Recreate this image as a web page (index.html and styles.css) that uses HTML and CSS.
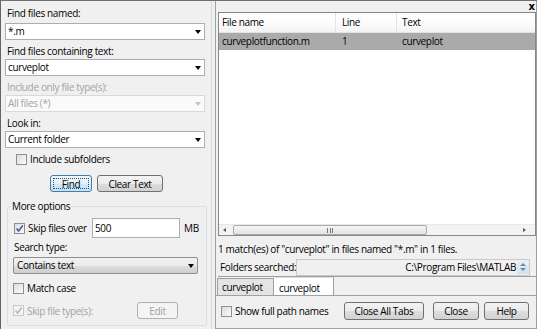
FILE: index.html
```html
<!DOCTYPE html>
<html>
<head>
<meta charset="utf-8">
<link rel="stylesheet" href="styles.css">
</head>
<body>
<div class="app">
  <div class="left">
    <div class="lbl first">Find files named:</div>
    <div class="combo"><span class="val">*.m</span><i class="arr"></i></div>
    <div class="lbl">Find files containing text:</div>
    <div class="combo"><span class="val">curveplot</span><i class="arr"></i></div>
    <div class="lbl dis">Include only file type(s):</div>
    <div class="combo disabled"><span class="val">All files (*)</span><i class="arr"></i></div>
    <div class="lbl">Look in:</div>
    <div class="combo"><span class="val">Current folder</span><i class="arr"></i></div>
    <div class="chkrow sub"><i class="box"></i><span>Include subfolders</span></div>
    <div class="btnrow">
      <div class="btn find"><span class="focus">Find</span></div>
      <div class="btn clear">Clear Text</div>
    </div>
    <fieldset class="group">
      <legend>More options</legend>
      <div class="skiprow">
        <i class="box checked"><svg width="9" height="9" viewBox="0 0 9 9"><path d="M1.5 4.5 L3.6 7 L7.8 1.5" fill="none" stroke="#3d57a0" stroke-width="1.5"/></svg></i>
        <span class="skiptxt">Skip files over</span>
        <div class="input">500</div>
        <span class="mb">MB</span>
      </div>
      <div class="lbl glbl">Search type:</div>
      <div class="combo sel"><span class="val">Contains text</span><i class="arr"></i></div>
      <div class="chkrow match"><i class="box"></i><span>Match case</span></div>
      <div class="chkrow skipft">
        <i class="box checked dbox"><svg width="9" height="9" viewBox="0 0 9 9"><path d="M1.5 4.5 L3.6 7 L7.8 1.5" fill="none" stroke="#b5b5b5" stroke-width="1.5"/></svg></i>
        <span class="dis skipft-txt">Skip file type(s):</span>
        <div class="btn edit">Edit</div>
      </div>
    </fieldset>
  </div>
  <div class="right">
    <div class="topbar"><span class="close">x</span></div>
    <div class="results">
      <div class="table">
        <div class="thead">
          <div class="c c1">File name</div>
          <div class="c c2">Line</div>
          <div class="c c3">Text</div>
        </div>
        <div class="trow sel">
          <div class="c c1">curveplotfunction.m</div>
          <div class="c c2">1</div>
          <div class="c c3">curveplot</div>
        </div>
        <div class="tspace"></div>
        <div class="hscroll">
          <span class="sarr l"></span>
          <div class="thumb"><span class="grip"></span></div>
          <span class="sarr r"></span>
        </div>
      </div>
      <div class="status">1 match(es) of "curveplot" in files named "*.m" in 1 files.</div>
      <div class="folders">
        <span class="flbl">Folders searched:</span>
        <div class="ffield"><span class="fval">C:\Program Files\MATLAB</span>
          <span class="spin"><i class="up"></i><i class="dn"></i></span>
        </div>
      </div>
    </div>
    <div class="tabs">
      <div class="tab t1">curveplot</div>
      <div class="tab t2">curveplot</div>
    </div>
    <div class="bottom">
      <div class="chkrow full"><i class="box"></i><span>Show full path names</span></div>
      <div class="btn cat">Close All Tabs</div>
      <div class="btn cls">Close</div>
      <div class="btn hlp">Help</div>
    </div>
  </div>
</div>
</body>
</html>
```

FILE: styles.css
```css
* { box-sizing: border-box; margin: 0; padding: 0; }
html, body { width: 537px; height: 329px; overflow: hidden; }
body {
  background: #f0f0f0;
  font-family: "Open Sans", "Noto Sans", sans-serif;
  font-size: 10px;
  letter-spacing: -0.35px;
  color: #000;
}
.app {
  display: flex;
  height: 329px;
  border-top: 1px solid #707070;
}

/* left panel */
.left {
  width: 212px;
  height: 328px;
  border-left: 1px solid #646464;
  border-right: 1px solid #dadada;
  padding: 0 6px 0 4px;
  display: flex;
  flex-direction: column;
}
.lbl {
  height: 15px;
  line-height: 15px;
  padding-left: 2px;
  margin-top: 4px;
  white-space: nowrap;
}
.lbl.first { margin-top: 5px; margin-bottom: 2px; }
.dis { color: #a3a3a3; }
.combo {
  height: 17px;
  border: 1px solid #abadb3;
  background: #fff;
  display: flex;
  align-items: center;
  justify-content: space-between;
  padding: 0 2px 0 2px;
  line-height: 15px;
}
.combo .arr {
  width: 0; height: 0;
  border-left: 3.5px solid transparent;
  border-right: 3.5px solid transparent;
  border-top: 4px solid #000;
  margin-right: 1px;
}
.combo.disabled { border-color: #d9d9d9; background: #fafafa; color: #a3a3a3; }
.combo.disabled .arr { border-top-color: #c3c3c3; }

.chkrow {
  display: flex;
  align-items: center;
  height: 14px;
  line-height: 14px;
  white-space: nowrap;
}
.box {
  display: inline-flex;
  align-items: center;
  justify-content: center;
  width: 11px;
  height: 11px;
  border: 1px solid #8f8f8f;
  background: linear-gradient(135deg, #dcdcdc, #fbfbfb);
  flex: none;
}
.box.dbox { border-color: #c9c9c9; background: #f4f4f4; }
.chkrow .box { margin-right: 3px; }
.chkrow.sub { margin-top: 4px; padding-left: 11px; }

.btnrow {
  display: flex;
  gap: 5px;
  margin-top: 9px;
  padding-left: 45px;
}
.btn {
  height: 17px;
  border: 1px solid #707070;
  border-radius: 3px;
  background: linear-gradient(#f3f3f3 0%, #ebebeb 50%, #dddddd 51%, #d2d2d2 100%);
  display: flex;
  align-items: center;
  justify-content: center;
  white-space: nowrap;
  line-height: 14px;
}
.btn.find {
  width: 42px;
  border-color: #3c7fb1;
  background: linear-gradient(#edf7fd 0%, #e2f2fc 50%, #cfe9f9 51%, #c4e3f7 100%);
  padding: 2px;
}
.btn.find .focus {
  flex: 1;
  align-self: stretch;
  border: 1px dotted #444;
  display: flex;
  align-items: center;
  justify-content: center;
}
.btn.clear { width: 66px; }

.group {
  margin: 7px -2px 0 2px;
  border: 1px solid #d5dfe5;
  border-radius: 3px;
  padding: 0 5px 6px 5px;
}
.group legend {
  margin-left: -2px;
  padding: 0 1px;
  line-height: 14px;
  height: 14px;
}
.skiprow {
  display: flex;
  align-items: center;
  height: 20px;
  margin-top: 5px;
  white-space: nowrap;
}
.skiprow .box { margin-left: 1px; margin-right: 3px; }
.skiptxt { width: 64px; }
.input {
  width: 88px;
  height: 20px;
  border: 1px solid #abadb3;
  background: #fff;
  padding-left: 2px;
  line-height: 18px;
}
.mb { margin-left: 4px; }
.glbl { margin-top: 2px; padding-left: 1px; }
.combo.sel {
  margin-top: 2px;
  width: 185px;
  border-color: #8e8f8f;
  border-radius: 2px;
  background: linear-gradient(#f2f2f2 0%, #ebebeb 50%, #dddddd 51%, #cfcfcf 100%);
  padding-left: 3px;
}
.chkrow.match { margin-top: 7px; }
.chkrow.skipft { margin-top: 7px; height: 17px; }
.skipft-txt { width: 110px; }
.btn.edit {
  width: 41px;
  height: 17px;
  border-color: #adb2b5;
  background: #f4f4f4;
  color: #a3a3a3;
}

/* right panel */
.right {
  margin-left: 3px;
  width: 322px;
  height: 328px;
  border-left: 1px solid #a0a0a0;
  border-right: 1px solid #a0a0a0;
  border-bottom: 1px solid #a0a0a0;
  display: flex;
  flex-direction: column;
}
.topbar {
  height: 11px;
  display: flex;
  justify-content: flex-end;
  align-items: center;
  padding-right: 1px;
}
.close {
  font-family: "DejaVu Sans", sans-serif;
  font-weight: bold;
  font-size: 10px;
  line-height: 10px;
  letter-spacing: 0;
}
.results {
  margin-left: 2px;
  height: 265px;
  display: flex;
  flex-direction: column;
  border-bottom: 1px solid #a0a0a0;
}
.table {
  height: 224px;
  border: 1px solid #828790;
  background: #fff;
  display: flex;
  flex-direction: column;
}
.thead {
  height: 20px;
  display: flex;
  background: linear-gradient(#ffffff 0%, #fbfbfb 60%, #f3f3f3 100%);
  border-bottom: 1px solid #e3e3e3;
}
.thead .c { border-right: 1px solid #e3e3e3; line-height: 19px; }
.c { padding-left: 3px; white-space: nowrap; }
.c1 { width: 117px; }
.c2 { width: 61px; padding-left: 6px; }
.c3 { flex: 1; padding-left: 5px; }
.thead .c3 { border-right: none; }
.trow { height: 17px; display: flex; line-height: 17px; }
.trow.sel { background: #aaaaaa; }
.tspace { flex: 1; }
.hscroll {
  height: 11px;
  display: flex;
  align-items: center;
  background: #f3f3f3;
  border-top: 1px solid #e8e8e8;
}
.sarr {
  width: 0; height: 0;
  border-top: 2.5px solid transparent;
  border-bottom: 2.5px solid transparent;
}
.sarr.l { border-right: 3px solid #555; margin-left: 4px; }
.sarr.r { border-left: 3px solid #555; margin-left: 96px; }
.thumb {
  margin-left: 7px;
  width: 194px;
  height: 10px;
  border: 1px solid #a9a9a9;
  border-radius: 2px;
  background: linear-gradient(#f6f6f6, #e2e2e2);
  display: flex;
  align-items: center;
  justify-content: center;
}
.grip {
  width: 6px;
  height: 5px;
  border-left: 1px solid #777;
  border-right: 1px solid #777;
  background: linear-gradient(90deg, transparent 2px, #777 2px, #777 3px, transparent 3px);
}
.status {
  height: 22px;
  padding-top: 6px;
  line-height: 14px;
  white-space: nowrap;
}
.folders {
  display: flex;
  align-items: center;
  height: 18px;
  padding-left: 2px;
  white-space: nowrap;
}
.flbl { width: 76px; }
.ffield {
  width: 234px;
  height: 17px;
  border: 1px solid #c9c9c9;
  background: #f0f0f0;
  display: flex;
  align-items: center;
  justify-content: flex-end;
}
.fval { line-height: 15px; }
.spin {
  width: 12px;
  height: 13px;
  margin-left: 1px;
  background: linear-gradient(#e8f1f8, #cfe2ef);
  display: flex;
  flex-direction: column;
  align-items: center;
  justify-content: center;
  gap: 2px;
}
.spin i { width: 0; height: 0; border-left: 3px solid transparent; border-right: 3px solid transparent; }
.spin .up { border-bottom: 3px solid #6d8aa4; }
.spin .dn { border-top: 3px solid #6d8aa4; }

.tabs {
  height: 19px;
  display: flex;
  align-items: flex-end;
  border-bottom: 1px solid #a0a0a0;
}
.tab {
  white-space: nowrap;
  display: flex;
  align-items: center;
}
.tab.t1 {
  margin-left: 1px;
  width: 57px;
  height: 17px;
  border: 1px solid #a0a0a0;
  border-bottom: none;
  background: #e4e4e4;
  padding-left: 4px;
}
.tab.t2 {
  width: 60px;
  height: 18px;
  border-right: 1px solid #a0a0a0;
  border-top: 1px solid #dcdcdc;
  background: #fff;
  padding-left: 5px;
  padding-top: 2px;
}
.bottom {
  flex: 1;
  display: flex;
  align-items: flex-start;
  padding-top: 6px;
}
.chkrow.full { margin-left: 5px; margin-top: 2px; width: 118px; }
.btn.cat { margin-left: 5px; width: 80px; height: 18px; }
.btn.cls { margin-left: 9px; width: 46px; height: 18px; }
.btn.hlp { margin-left: 5px; width: 45px; height: 18px; }
```
